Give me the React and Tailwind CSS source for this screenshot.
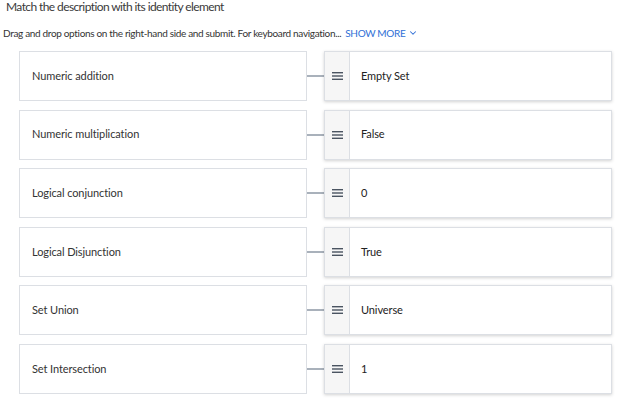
import { ChevronDown } from "lucide-react"

const rows = [
  ["Numeric addition", "Empty Set"],
  ["Numeric multiplication", "False"],
  ["Logical conjunction", "0"],
  ["Logical Disjunction", "True"],
  ["Set Union", "Universe"],
  ["Set Intersection", "1"],
]

function Handle() {
  return (
    <svg width="11" height="8" viewBox="0 0 11 8" className="block">
      <rect x="0" y="0" width="11" height="1.4" fill="#4a5461" />
      <rect x="0" y="3.3" width="11" height="1.4" fill="#4a5461" />
      <rect x="0" y="6.6" width="11" height="1.4" fill="#4a5461" />
    </svg>
  )
}

export default function App() {
  return (
    <div className="w-[619px] h-[399px] bg-white text-[#333] overflow-hidden" style={{ fontFamily: "Lato, 'Open Sans', sans-serif" }}>
      <div className="pl-[6px] text-[12px] leading-[14px] tracking-[-0.6px] text-[#3a3a3a]">Match the description with its identity element</div>
      <div className="pl-[3px] mt-[12px] flex items-center text-[10px] leading-[14px] tracking-[-0.33px] text-[#333]">
        <span>Drag and drop options on the right-hand side and submit. For keyboard navigation...</span>
        <span className="ml-[4px] text-[#2f6fd6] flex items-center gap-[3px]">
          SHOW MORE
          <ChevronDown size={10} strokeWidth={2.5} />
        </span>
      </div>
      <div className="mt-[11px] pl-[19px] flex flex-col gap-[8.6px]">
        {rows.map(([left, right]) => (
          <div key={left} className="flex items-center">
            <div className="w-[288px] h-[50px] border border-[#dcdfe4] flex items-center pl-[12px] text-[11px] tracking-[-0.1px]">{left}</div>
            <div className="w-[17px] h-[2px] bg-[#a9b1bb]" />
            <div className="w-[288px] h-[50px] border border-[#dcdfe4] shadow-[0_1px_3px_rgba(0,0,0,0.18)] flex bg-white">
              <div className="w-[25px] bg-[#f6f6f6] border-r border-[#dcdfe4] flex items-center justify-center">
                <Handle />
              </div>
              <div className="flex items-center pl-[11px] text-[11px] tracking-[-0.1px] text-[#222]">{right}</div>
            </div>
          </div>
        ))}
      </div>
    </div>
  )
}
